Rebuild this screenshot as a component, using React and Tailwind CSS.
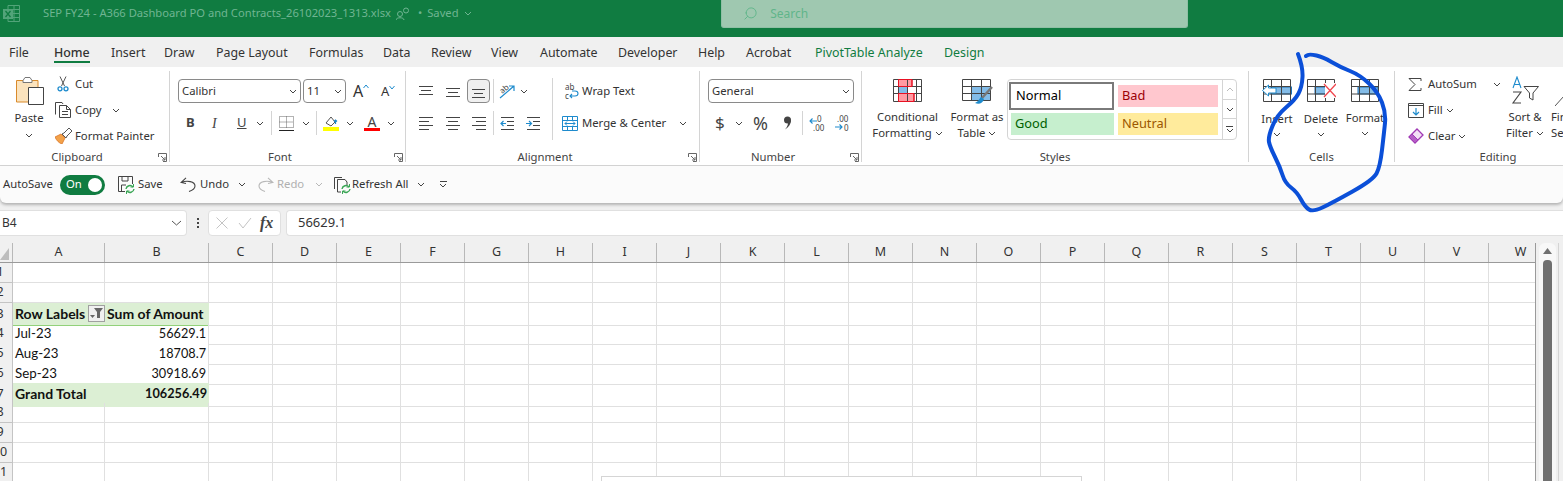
import { Search } from 'lucide-react';

const TABS = [
  { label: 'File', w: 'w-[45px]' },
  { label: 'Home', w: 'w-[57px]', active: true },
  { label: 'Insert', w: 'w-[53px]' },
  { label: 'Draw', w: 'w-[52px]' },
  { label: 'Page Layout', w: 'w-[93px]' },
  { label: 'Formulas', w: 'w-[74px]' },
  { label: 'Data', w: 'w-[48px]' },
  { label: 'Review', w: 'w-[60px]' },
  { label: 'View', w: 'w-[49px]' },
  { label: 'Automate', w: 'w-[78px]' },
  { label: 'Developer', w: 'w-[80px]' },
  { label: 'Help', w: 'w-[48px]' },
  { label: 'Acrobat', w: 'w-[69px]' },
  { label: 'PivotTable Analyze', w: 'w-[129px]', green: true },
  { label: 'Design', w: 'w-[60px]', green: true },
];

const COLS = 'ABCDEFGHIJKLMNOPQRSTUVW'.split('');
const ROWS = [1, 2, 3, 4, 5, 6, 7, 8, 9, 10, 11];
const PIVOT = {
  4: ['Jul-23', '56629.1'],
  5: ['Aug-23', '18708.7'],
  6: ['Sep-23', '30918.69'],
  7: ['Grand Total', '106256.49'],
};

function Chev({ className = '', color = '#444' }) {
  return (
    <svg width="8" height="5" viewBox="0 0 8 5" className={`shrink-0 ${className}`}>
      <path d="M1 1l3 3 3-3" fill="none" stroke={color} strokeWidth="1" />
    </svg>
  );
}

function Launcher() {
  return (
    <svg width="9" height="9" viewBox="0 0 9 9" className="absolute right-[2px] bottom-[0px]">
      <path d="M.5 4V.5H8.500V8.500H5M3 3l4 4M7 4v3H4" fill="none" stroke="#666" strokeWidth="1" />
    </svg>
  );
}

function Lines({ rows, w = 16, h = 14 }) {
  return (
    <svg width={w} height={h} viewBox={`0 0 ${w} ${h}`} className="shrink-0">
      {rows.map(([x1, x2, y], i) => (
        <path key={i} d={`M${x1} ${y + 0.5}H${x2}`} stroke="#444" strokeWidth="1" />
      ))}
    </svg>
  );
}

function Indent({ right }) {
  return (
    <svg width="15" height="13" viewBox="0 0 15 13" className="shrink-0">
      <path d="M1 .5H14M7 4.500H14M7 8.500H14M1 12.500H14" stroke="#444" />
      <path d={right ? 'M0 6.500H5M3 4l2.500 2.500L3 9' : 'M6 6.500H1M3.500 4L1 6.500 3.500 9'} fill="none" stroke="#1e8bcd" strokeWidth="1.200" />
    </svg>
  );
}

function Group({ label, w, children, launcher, sep = true }) {
  return (
    <div className={`relative flex h-[91px] shrink-0 flex-col ${w} ${sep ? 'border-r border-[#d4d4d4]' : ''}`}>
      <div className="min-h-0 flex-1">{children}</div>
      <div className={`h-[12px] text-center leading-[14px] text-[#444] ${launcher ? 'pr-[15px]' : ''}`}>{label}</div>
      {launcher && <Launcher />}
    </div>
  );
}

function Combo({ text, w, h = 'h-[24px]' }) {
  return (
    <div className={`flex items-center justify-between rounded-[4px] border border-[#8a8a8a] bg-white pl-[3px] pr-[3px] ${w} ${h}`}>
      <span>{text}</span>
      <Chev />
    </div>
  );
}

function PasteIcon() {
  return (
    <svg width="30" height="29" viewBox="0 0 30 29">
      <path d="M2.500 4.500H24V26H2.500z" fill="#fbe3bd" stroke="#d98a2b" />
      <path d="M9 4.500L11 1.500H16L18 4.500V6.500H9z" fill="#fff" stroke="#777" />
      <path d="M14.500 11.500H29.500V28.500H14.500z" fill="#fff" stroke="#444" />
    </svg>
  );
}

function CutIcon() {
  return (
    <svg width="12" height="16" viewBox="0 0 12 16">
      <path d="M3 .5L7.500 10M9 .5L4.500 10" stroke="#555" fill="none" />
      <circle cx="3" cy="12.800" r="2" fill="none" stroke="#1e8bcd" strokeWidth="1.300" />
      <circle cx="9" cy="12.800" r="2" fill="none" stroke="#1e8bcd" strokeWidth="1.300" />
    </svg>
  );
}

function CopyIcon() {
  return (
    <svg width="17" height="16" viewBox="0 0 17 16">
      <path d="M.5 12.500V.5H7L8 2M4.500 15.500V3.500H11.500L15.500 7.500V15.500z" fill="none" stroke="#444" />
      <path d="M11.500 3.500V7.500H15.500M7 9.500H13M7 12.500H13" fill="none" stroke="#444" />
    </svg>
  );
}

function BrushIcon() {
  return (
    <svg width="17" height="16" viewBox="0 0 17 16">
      <path d="M0 9l6-3 4 4-3 6C4 15 1.500 12.500 0 9z" fill="#f3a24a" stroke="#d9762a" strokeWidth=".8" />
      <path d="M7 6l2-1 5-5 3 3-5 5-1 2z" fill="#fff" stroke="#555" />
    </svg>
  );
}

function BorderIcon() {
  return (
    <svg width="15" height="15" viewBox="0 0 15 15" className="shrink-0">
      <path d="M.5.5H14.500V11.500H.5z" fill="none" stroke="#666" strokeDasharray="1 1" />
      <path d="M7.500.5V11.500M.5 6H14.500" stroke="#666" strokeDasharray="1 1" />
      <path d="M0 14.500H15" stroke="#222" />
    </svg>
  );
}

function FillIcon() {
  return (
    <svg width="16" height="16" viewBox="0 0 16 16" className="shrink-0">
      <path d="M3 8l5-6 4 5-4 4z" fill="#fff" stroke="#555" />
      <path d="M12.500 9V5M11 6.500l1.500-1.500L14 6.500" fill="none" stroke="#1e8bcd" strokeWidth="1.200" />
      <rect y="12" width="16" height="4" fill="#ffff00" />
    </svg>
  );
}

function OrientIcon() {
  return (
    <svg width="17" height="15" viewBox="0 0 17 15" className="overflow-visible">
      <path d="M1 14L15 2M10 2h5v5" fill="none" stroke="#1e8bcd" strokeWidth="1.200" />
      <text x="1" y="8" fontSize="8" fill="#444" transform="rotate(-40 5 6)">ab</text>
    </svg>
  );
}

function WrapIcon() {
  return (
    <svg width="16" height="17" viewBox="0 0 16 17" className="overflow-visible">
      <text x="1" y="7" fontSize="8" fill="#444">ab</text>
      <text x="1" y="16" fontSize="8" fill="#444">c</text>
      <path d="M6 13h5c4 0 4-5 0-5H8M8 11l-2 2 2 2" fill="none" stroke="#1e8bcd" strokeWidth="1.100" />
    </svg>
  );
}

function MergeIcon() {
  return (
    <svg width="16" height="15" viewBox="0 0 16 15">
      <path d="M.5.5H15.500V14.500H.5z" fill="none" stroke="#1e8bcd" />
      <path d="M.5 4.500H15.500M.5 10.500H15.500M5.500.5V4.500M10.500.5V4.500M5.500 10.500V14.500M10.500 10.500V14.500" stroke="#1e8bcd" />
      <path d="M3 7.500H13M5 5.500L3 7.500 5 9.500M11 5.500L13 7.500 11 9.500" fill="none" stroke="#1e8bcd" />
    </svg>
  );
}

function DecimalIcon({ more }) {
  return (
    <svg width="17" height="17" viewBox="0 0 17 17" className="shrink-0 overflow-visible">
      <text x={more ? 3 : 8} y="7" fontSize="8" fill="#444">{more ? '.00' : '0'}</text>
      <text x={more ? 10 : 4} y="16" fontSize="8" fill="#444">{more ? '0' : '.00'}</text>
      <path d={more ? 'M1 12H8M5.500 9.500L8 12 5.500 14.500' : 'M8 6H1M3.500 3.500L1 6 3.500 8.500'} fill="none" stroke="#1e8bcd" strokeWidth="1.100" />
    </svg>
  );
}

function CommaIcon() {
  return (
    <svg width="9" height="14" viewBox="0 0 9 14" className="shrink-0">
      <circle cx="4.500" cy="4" r="3.500" fill="#444" />
      <path d="M8 4c0 4-2 7-6 9.500C5 10 5 8 5 6z" fill="#444" />
    </svg>
  );
}

function CondIcon() {
  return (
    <svg width="29" height="23" viewBox="0 0 29 23">
      <path d="M5.500.5H19V7.500H5.500zM5.500 14.500H21V22.500H5.500z" fill="#ff9aa2" stroke="#e81123" />
      <rect x="5.500" y="7.500" width="9" height="7" fill="#83bce8" />
      <path d="M.5.5H28.500V22.500H.5zM.5 7.500H28.500M.5 14.500H28.500M5.500.5V22.500M14.500.5V22.500M23.500.5V22.500" fill="none" stroke="#444" />
      <path d="M5.500.5H19V7.500H5.500zM5.500 14.500H21V22.500H5.500z" fill="none" stroke="#e81123" />
    </svg>
  );
}

function TableIcon() {
  return (
    <svg width="31" height="27" viewBox="0 0 31 27">
      <rect x="10" y="7" width="18" height="15" fill="#83bce8" />
      <path d="M.5.5H28.500V21.500H.5zM.5 7.500H28.500M.5 14.500H28.500M9.500.5V21.500M19.500.5V21.500" fill="none" stroke="#444" />
      <path d="M30 8L20 19" stroke="#777" strokeWidth="2.500" />
      <path d="M19 18c-2 2-2 4-6 6 4 2 8 0 9-4z" fill="#1e8bcd" />
    </svg>
  );
}

function CellGrid({ kind }) {
  return (
    <svg width="30" height="23" viewBox="0 0 30 23">
      {kind === 'insert' && <rect x="9" y="8" width="20.500" height="7" fill="#83bce8" stroke="#1e72b8" />}
      {kind === 'delete' && <rect x="9" y="8" width="14" height="7" fill="#83bce8" stroke="#1e72b8" />}
      {kind === 'format' && <rect x="8" y="8" width="20" height="7" fill="#83bce8" stroke="#1e72b8" />}
      <path d="M1.500.5H28.500V22.500H1.500zM1.500 7.500H28.500M1.500 15H28.500M9.500.5V22.500M19.500.5V22.500" fill="none" stroke="#444" />
      {kind === 'insert' && <path d="M14 9H6.500V6L.5 11.500 6.500 17V14H14z" fill="#fff" stroke="#1e8bcd" />}
      {kind === 'delete' && (
        <>
          <rect x="19" y="4" width="11" height="15" fill="#fff" />
          <path d="M18 5L30 18M30 5L18 18" stroke="#f0474f" strokeWidth="1.300" />
        </>
      )}
    </svg>
  );
}

function SumIcon() {
  return (
    <svg width="14" height="13" viewBox="0 0 14 13">
      <path d="M13 3V.5H1L7 6.500 1 12.500H13V10" fill="none" stroke="#444" />
    </svg>
  );
}

function DownIcon() {
  return (
    <svg width="16" height="15" viewBox="0 0 16 15">
      <path d="M.5 14.500V.5H15.500V14.500z" fill="none" stroke="#444" />
      <path d="M.5 2.500H15.500" stroke="#444" />
      <path d="M8 5V12M5 9l3 3 3-3" fill="none" stroke="#1e8bcd" strokeWidth="1.200" />
    </svg>
  );
}

function EraserIcon() {
  return (
    <svg width="16" height="16" viewBox="0 0 16 16">
      <path d="M1 9l8-8 6 6-8 8z" fill="#f3dff5" stroke="#a13ab5" strokeWidth="1.300" />
      <path d="M1 9l3-3 6 6-3 3z" fill="#b55dc6" stroke="#a13ab5" />
    </svg>
  );
}

function SortIcon() {
  return (
    <svg width="28" height="29" viewBox="0 0 28 29">
      <path d="M2 12L6 1l4 11M3.500 8.500H8.500" fill="none" stroke="#1e8bcd" strokeWidth="1.100" />
      <path d="M2 16H10L2 27H10" fill="none" stroke="#444" strokeWidth="1.100" />
      <path d="M13 10.500H27.500L22 17V24L18.500 22V17z" fill="#fff" stroke="#444" />
    </svg>
  );
}

function SyncBadgeIcon({ refresh }) {
  return (
    <svg width="17" height="18" viewBox="0 0 17 18">
      {refresh ? (
        <path d="M.5 13V1.500H8M3.500 16V3.500H11L13 6V9M3.500 16H7" fill="none" stroke="#444" />
      ) : (
        <path d="M7 15.500H.5V.5H14.500V8M4 .5V5H10V.5M3.500 15V9H8" fill="none" stroke="#444" />
      )}
      <path d="M8 13a4 4 0 0 1 7-2M16 13a4 4 0 0 1-7 2" fill="none" stroke="#3aa655" strokeWidth="1.400" />
      <path d="M15.500 8v3h-3M8.500 18v-3h3" fill="none" stroke="#3aa655" strokeWidth="1" />
    </svg>
  );
}

function UndoIcon({ redo }) {
  const color = redo ? '#b8b8b8' : '#444';
  return (
    <svg width="16" height="15" viewBox="0 0 16 15" className={redo ? '-scale-x-100' : ''}>
      <path d="M6 .8L1 5.500l5 1M1.500 5.500C7 3 15 4.500 15 9c0 2.500-3 4.500-6 5.500" fill="none" stroke={color} strokeWidth="1.100" />
    </svg>
  );
}

function ExcelLogo() {
  return (
    <svg width="17" height="17" viewBox="0 0 17 17" className="opacity-60">
      <path d="M5 .5H16.500V16.500H5z" fill="none" stroke="#7fbf9f" />
      <path d="M11 .5V16.500M5 4.500H16.500M5 8.500H16.500M5 12.500H16.500" stroke="#7fbf9f" />
      <rect y="4" width="10" height="10" fill="#7fbf9f" />
      <path d="M2.500 6l5 6M7.500 6l-5 6" stroke="#107c41" strokeWidth="1.300" />
    </svg>
  );
}

// hand drawn ring round the Cells group, smoothed through midpoints
const RING = [
  [1298, 54], [1303, 67], [1302, 87], [1295, 100], [1277, 115], [1268, 137], [1270, 147], [1280, 167],
  [1285, 183], [1297, 192], [1305, 207], [1313, 212], [1332, 203], [1373, 180], [1380, 167], [1384, 133],
  [1386, 113], [1378, 92], [1360, 75], [1340, 67], [1323, 57], [1310, 54], [1306, 56],
];

function ringPath() {
  let d = `M${RING[0][0]} ${RING[0][1]}`;
  for (let i = 1; i < RING.length - 1; i++) {
    const mx = (RING[i][0] + RING[i + 1][0]) / 2;
    const my = (RING[i][1] + RING[i + 1][1]) / 2;
    d += ` Q${RING[i][0]} ${RING[i][1]} ${mx} ${my}`;
  }
  return d + ` L${RING[RING.length - 1][0]} ${RING[RING.length - 1][1]}`;
}

function TitleBar() {
  return (
    <div className="flex h-[37px] shrink-0 items-start bg-[#107c41] pl-[3px] text-[11.200px] text-[#6fb592]">
      <div className="mt-[5px]"><ExcelLogo /></div>
      <div className="ml-[23px] mt-[5px] w-[353px] whitespace-nowrap">SEP FY24 - A366 Dashboard PO and Contracts_26102023_1313.xlsx</div>
      <svg width="14" height="14" viewBox="0 0 14 14" className="mt-[7px]">
        <circle cx="4" cy="7" r="2.500" fill="none" stroke="#6fb592" />
        <path d="M0 13c0-3 8-3 8 0" fill="none" stroke="#6fb592" />
        <circle cx="10" cy="3.500" r="2.500" fill="none" stroke="#6fb592" />
      </svg>
      <span className="ml-[8px] mt-[5px]">•</span>
      <span className="ml-[5px] mt-[5px] w-[35px]">Saved</span>
      <Chev className="ml-[2px] mt-[11px]" color="#6fb592" />
      <div className="ml-[249px] flex h-[28px] w-[467px] items-center rounded-b-[3px] border-b border-l border-r border-[#8fbfa5] bg-[#9fc8b0] pl-[21px] text-[12px] text-[#5fb58a]">
        <Search size={15} strokeWidth={1.500} className="-scale-x-100" />
        <span className="ml-[12px]">Search</span>
      </div>
    </div>
  );
}

function Tabs() {
  return (
    <div className="flex h-[30px] shrink-0 bg-[#f0f0f0] pl-[9px] text-[12.400px] text-[#333]">
      {TABS.map((t) => (
        <div key={t.label} className={`shrink-0 leading-[31px] ${t.w} ${t.green ? 'text-[#107c41]' : ''}`}>
          <span className={`inline-block h-[26px] ${t.active ? 'border-b-2 border-[#107c41] font-medium' : ''}`}>{t.label}</span>
        </div>
      ))}
    </div>
  );
}

function Clipboard() {
  return (
    <Group label="Clipboard" w="w-[170px]" launcher>
      <div className="flex">
        <div className="ml-[11px] flex w-[36px] flex-col items-center pt-[5px]">
          <PasteIcon />
          <span className="mt-[5px]">Paste</span>
          <Chev className="mt-[6px]" />
        </div>
        <div className="ml-[10px] flex flex-col">
          <div className="flex h-[26px] items-center"><span className="w-[18px]"><CutIcon /></span><span>Cut</span></div>
          <div className="flex h-[26px] items-center"><span className="-ml-[2px] w-[20px]"><CopyIcon /></span><span>Copy</span><Chev className="ml-[11px]" /></div>
          <div className="flex h-[26px] items-center"><span className="-ml-[2px] w-[20px]"><BrushIcon /></span><span>Format Painter</span></div>
        </div>
      </div>
    </Group>
  );
}

function Font() {
  return (
    <Group label="Font" w="w-[236px]" launcher>
      <div className="ml-[8px] mt-[8px] flex items-center">
        <Combo text="Calibri" w="w-[123px]" />
        <Combo text="11" w="w-[43px] ml-[2px]" />
        <span className="ml-[7px] flex w-[28px] items-start text-[16px] leading-none">A<svg width="6" height="5" viewBox="0 0 6 5" className="mt-[1px]"><path d="M.5 4L3 1l2.500 3" fill="none" stroke="#1e8bcd" /></svg></span>
        <span className="flex w-[20px] items-start text-[13px] leading-none">A<svg width="6" height="5" viewBox="0 0 6 5"><path d="M.5 1L3 4l2.500-3" fill="none" stroke="#1e8bcd" /></svg></span>
      </div>
      <div className="mt-[8px] flex h-[24px] items-center pl-[15px] text-[#444]">
        <span className="w-[26px] pl-[1px] text-[13px] font-bold">B</span>
        <span className="w-[26px] pl-[1px] font-['Liberation_Serif',serif] text-[14px] italic">I</span>
        <span className="w-[19px] text-[13px] underline">U</span>
        <Chev />
        <span className="mx-[7px] h-[24px] border-r border-[#d4d4d4]" />
        <BorderIcon />
        <Chev className="ml-[8px]" />
        <span className="mx-[6px] h-[24px] border-r border-[#d4d4d4]" />
        <FillIcon />
        <Chev className="ml-[7px]" />
        <span className="ml-[10px] flex w-[16px] flex-col items-center text-[14px] leading-[13px]">A<span className="h-[3px] w-[16px] bg-[#ff0000]" /></span>
        <Chev className="ml-[7px]" />
      </div>
    </Group>
  );
}

function Alignment() {
  return (
    <Group label="Alignment" w="w-[294px]" launcher>
      <div className="flex">
        <div className="ml-[6px] flex w-[135px] shrink-0 flex-col">
          <div className="mt-[8px] flex h-[24px] items-center">
            <span className="flex w-[27px] justify-center"><Lines rows={[[1, 15, 2], [3, 13, 6], [1, 15, 10]]} /></span>
            <span className="flex w-[28px] justify-center"><Lines rows={[[1, 15, 4], [3, 13, 8], [1, 15, 12]]} /></span>
            <span className="flex h-[24px] w-[23px] items-center justify-center rounded-[4px] border border-[#8a8a8a] bg-[#f0f0f0]"><Lines rows={[[1, 14, 5], [3, 12, 9], [1, 14, 13]]} /></span>
            <span className="mx-[3px] h-[24px] border-r border-[#d4d4d4]" />
            <span className="ml-[2px]"><OrientIcon /></span>
            <Chev className="ml-[4px]" />
          </div>
          <div className="mt-[8px] flex h-[24px] items-center">
            <span className="flex w-[27px] justify-center"><Lines rows={[[1, 15, 1], [1, 11, 5], [1, 15, 9], [1, 11, 13]]} /></span>
            <span className="flex w-[28px] justify-center"><Lines rows={[[1, 15, 1], [3, 13, 5], [1, 15, 9], [3, 13, 13]]} /></span>
            <span className="flex w-[23px] justify-center"><Lines rows={[[1, 15, 1], [5, 15, 5], [1, 15, 9], [5, 15, 13]]} /></span>
            <span className="mx-[3px] h-[24px] border-r border-[#d4d4d4]" />
            <span className="ml-[3px]"><Indent /></span>
            <span className="ml-[11px]"><Indent right /></span>
          </div>
        </div>
        <span className="ml-[5px] mt-[7px] h-[62px] border-r border-[#d4d4d4]" />
        <div className="ml-[9px] flex flex-col">
          <div className="mt-[8px] flex h-[24px] items-center"><span className="ml-[2px] w-[18px]"><WrapIcon /></span>Wrap Text</div>
          <div className="mt-[8px] flex h-[24px] items-center"><span className="w-[20px]"><MergeIcon /></span>Merge &amp; Center<Chev className="ml-[13px]" /></div>
        </div>
      </div>
    </Group>
  );
}

function NumberGroup() {
  return (
    <Group label="Number" w="w-[162px]" launcher>
      <div className="ml-[8px] mt-[8px]"><Combo text="General" w="w-[146px]" /></div>
      <div className="mt-[8px] flex h-[24px] items-center pl-[15px] text-[#444]">
        <span className="w-[20px] text-[17px]">$</span>
        <Chev />
        <span className="ml-[10px] w-[25px] text-[18px]">%</span>
        <span className="ml-[5px]"><CommaIcon /></span>
        <span className="ml-[10px] h-[24px] border-r border-[#d4d4d4]" />
        <span className="ml-[6px]"><DecimalIcon /></span>
        <span className="ml-[8px]"><DecimalIcon more /></span>
      </div>
    </Group>
  );
}

function StyleSwatch({ text, cls }) {
  return <div className={`flex items-center pl-[4px] text-[12.800px] ${cls}`}>{text}</div>;
}

function Styles() {
  return (
    <Group label="Styles" w="w-[387px]">
      <div className="flex">
        <div className="ml-[10px] flex w-[71px] flex-col items-center pt-[8px]">
          <CondIcon />
          <span className="mt-[7px] leading-[16px]">Conditional</span>
          <span className="flex items-center leading-[16px]">Formatting<Chev className="ml-[3px]" /></span>
        </div>
        <div className="ml-[4px] flex w-[60px] flex-col items-center pt-[8px]">
          <TableIcon />
          <span className="mt-[3px] leading-[16px]">Format as</span>
          <span className="flex items-center leading-[16px]">Table<Chev className="ml-[3px]" /></span>
        </div>
        <div className="mt-[8px] flex h-[61px] w-[230px] rounded-[4px] border border-[#d4d4d4]">
          <div className="grid w-[214px] grid-cols-[105px_100px] grid-rows-[28px_22px] items-center gap-x-[4px] gap-y-[3px] pl-[1px] pt-[2px]">
            <StyleSwatch text="Normal" cls="h-[28px] border-2 border-[#7a7a7a] bg-white pl-[5px] text-black" />
            <StyleSwatch text="Bad" cls="h-[22px] bg-[#ffc7ce] text-[#9c0006]" />
            <StyleSwatch text="Good" cls="ml-[2px] h-[22px] bg-[#c6efce] text-[#006100]" />
            <StyleSwatch text="Neutral" cls="h-[22px] bg-[#ffeb9c] text-[#9c5700]" />
          </div>
          <div className="flex flex-1 flex-col border-l border-[#d4d4d4]">
            <div className="flex h-[20px] items-center justify-center border-b border-[#d4d4d4]"><Chev className="rotate-180" color="#bbb" /></div>
            <div className="flex h-[19px] items-center justify-center border-b border-[#d4d4d4]"><Chev /></div>
            <div className="flex flex-1 flex-col items-center justify-center gap-[1px]"><span className="h-px w-[7px] bg-[#444]" /><Chev /></div>
          </div>
        </div>
      </div>
    </Group>
  );
}

function CellButton({ kind, label, w, top = 'mt-[9px]' }) {
  return (
    <div className={`flex flex-col items-center pt-[8px] ${w}`}>
      <CellGrid kind={kind} />
      <span className={`leading-[16px] ${top}`}>{label}</span>
      <Chev className="mt-[5px]" />
    </div>
  );
}

function Cells() {
  return (
    <Group label="Cells" w="w-[146px]">
      <div className="flex pl-[6px]">
        <CellButton kind="insert" label="Insert" w="w-[44px]" />
        <CellButton kind="delete" label="Delete" w="w-[44px]" />
        <CellButton kind="format" label="Format" w="w-[44px]" top="mt-[8px]" />
      </div>
    </Group>
  );
}

function Editing() {
  return (
    <Group label="Editing" w="w-[206px]" sep={false}>
      <div className="flex">
        <div className="ml-[13px] flex w-[98px] shrink-0 flex-col">
          <div className="flex h-[26px] items-center"><span className="w-[20px]"><SumIcon /></span>AutoSum<Chev className="ml-[16px]" /></div>
          <div className="flex h-[26px] items-center"><span className="w-[20px]"><DownIcon /></span>Fill<Chev className="ml-[3px]" /></div>
          <div className="flex h-[26px] items-center"><span className="w-[20px]"><EraserIcon /></span>Clear<Chev className="ml-[3px]" /></div>
        </div>
        <div className="flex w-[38px] shrink-0 flex-col items-center pt-[5px]">
          <SortIcon />
          <span className="mt-[4px] leading-[16px]">Sort &amp;</span>
          <span className="flex items-center leading-[16px]">Filter<Chev className="ml-[3px]" /></span>
        </div>
        <div className="ml-[7px] flex shrink-0 flex-col pt-[24px]">
          <svg width="14" height="12" viewBox="0 0 14 12" className="ml-[4px] mb-[2px]"><path d="M0 11L9 1" stroke="#555" /></svg>
          <span className="leading-[16px]">Find &amp;</span>
          <span className="leading-[16px]">Select</span>
        </div>
      </div>
    </Group>
  );
}

function QuickAccess() {
  return (
    <div className="flex h-[37px] shrink-0 items-center rounded-b-[6px] bg-[#fbfbfb] pl-[3px] shadow-[0_2px_3px_rgba(0,0,0,0.25)]">
      <span className="w-[50px]">AutoSave</span>
      <div className="ml-[7px] flex h-[20px] w-[45px] items-center justify-between rounded-full bg-[#107c41] pl-[6px] pr-[3px] text-white">
        <span>On</span>
        <span className="h-[14px] w-[14px] rounded-full bg-white" />
      </div>
      <span className="ml-[13px]"><SyncBadgeIcon /></span>
      <span className="ml-[3px] w-[30px]">Save</span>
      <span className="ml-[12px]"><UndoIcon /></span>
      <span className="ml-[4px] w-[31px]">Undo</span>
      <Chev className="ml-[7px]" />
      <span className="ml-[12px]"><UndoIcon redo /></span>
      <span className="ml-[3px] w-[29px] text-[#b0b0b0]">Redo</span>
      <Chev className="ml-[9px]" color="#b8b8b8" />
      <span className="ml-[11px]"><SyncBadgeIcon refresh /></span>
      <span className="ml-[1px] w-[58px]">Refresh All</span>
      <Chev className="ml-[7px]" />
      <span className="ml-[14px] flex flex-col items-center gap-[1px]"><span className="h-px w-[7px] bg-[#444]" /><Chev /></span>
    </div>
  );
}

function FormulaBar() {
  return (
    <div className="flex h-[26px] shrink-0 items-stretch">
      <div className="flex w-[187px] items-center justify-between rounded-r-[4px] border border-l-0 border-[#e0e0e0] bg-white pl-[2px] pr-[4px] text-[12px]">
        <span>B4</span>
        <svg width="11" height="6" viewBox="0 0 11 6"><path d="M1 1l4.500 4L10 1" fill="none" stroke="#555" /></svg>
      </div>
      <div className="flex w-[21px] flex-col items-center justify-center gap-[2px]">
        <span className="h-[2px] w-[2px] bg-[#444]" />
        <span className="h-[2px] w-[2px] bg-[#444]" />
        <span className="h-[2px] w-[2px] bg-[#444]" />
      </div>
      <div className="flex w-[73px] items-center rounded-[4px] border border-[#e0e0e0] bg-white pl-[7px]">
        <svg width="12" height="12" viewBox="0 0 12 12"><path d="M.5.5l11 11M11.500.5l-11 11" stroke="#c4c4c4" /></svg>
        <svg width="14" height="12" viewBox="0 0 14 12" className="ml-[10px]"><path d="M1 6l4 5L13 1" fill="none" stroke="#c4c4c4" /></svg>
        <span className="ml-[8px] font-['Liberation_Serif',serif] text-[16px] font-bold italic text-[#444]">fx</span>
      </div>
      <div className="ml-[5px] flex flex-1 items-center rounded-l-[4px] border border-r-0 border-[#e0e0e0] bg-white pl-[11px] text-[13px]">56629.1</div>
    </div>
  );
}

function ColumnHeader() {
  return (
    <div className="grid h-[20px] grid-cols-[13px_92px_104px_repeat(21,64px)] border-b border-[#9a9a9a] bg-[#f0f0f0] text-[12.500px] text-[#333]">
      <div className="flex items-end justify-end border-r border-[#b8b8b8] pb-[2px] pr-[3px]">
        <svg width="9" height="12" viewBox="0 0 9 12" className="-ml-px"><path d="M9 0V12H0z" fill="#bdbdbd" /></svg>
      </div>
      {COLS.map((c) => (
        <div key={c} className="flex items-center justify-center border-r border-[#b8b8b8]">{c}</div>
      ))}
    </div>
  );
}

function PivotCell({ row, index }) {
  const total = row === 7;
  const data = PIVOT[row];
  let cls = 'pt-[1px] border-b border-white';
  if (row === 3) cls = 'pb-[1px] bg-[#dcefd4] border-b border-[#92d17a]';
  if (row === 6) cls = 'pt-[1px] border-b border-[#92d17a]';
  if (total) cls = 'pb-[2px] bg-[#dcefd4] border-b border-[#dcefd4]';
  if (index === 1 && !total && row !== 3) cls += ' border-r border-r-[#e0e0e0]';

  if (row === 3 && index === 0) {
    return (
      <div className={`flex items-center justify-between pl-[2px] text-[14px] font-bold ${cls}`}>
        <span>Row Labels</span>
        <span className="flex h-[17px] w-[17px] items-center justify-center border border-[#a0a0a0] bg-[#f0f0f0]">
          <svg width="13" height="11" viewBox="0 0 13 11">
            <path d="M4 0H13L10 4V10H7V4z" fill="#666" />
            <path d="M0 7H5L2.500 10z" fill="#666" />
          </svg>
        </span>
      </div>
    );
  }
  if (row === 3) {
    return <div className={`flex items-center whitespace-nowrap pl-[2px] text-[14px] font-bold ${cls}`}>Sum of Amount</div>;
  }
  if (index === 0) {
    return <div className={`flex items-center pl-[2px] ${total ? 'text-[14px] font-bold' : 'text-[13.300px]'} ${cls}`}>{data[0]}</div>;
  }
  return <div className={`flex items-center justify-end pr-[2px] text-[12.700px] ${total ? 'font-bold' : ''} ${cls}`}>{data[1]}</div>;
}

function SheetRow({ row }) {
  const isPivot = row >= 3 && row <= 7;
  return (
    <div className="grid h-[20px] grid-cols-[13px_92px_104px_repeat(21,64px)] font-['Lato',sans-serif] text-[#111]">
      <div className="flex items-center overflow-hidden border-r border-b border-[#c4c4c4] bg-[#f0f0f0] font-['Noto_Sans',sans-serif] text-[12.500px] text-[#333]">
        <span className="-ml-[12px] w-[24px] shrink-0 text-center">{row}</span>
      </div>
      {isPivot ? (
        <>
          <PivotCell row={row} index={0} />
          <PivotCell row={row} index={1} />
        </>
      ) : (
        <>
          <div className="border-r border-b border-[#e0e0e0]" />
          <div className="border-r border-b border-[#e0e0e0]" />
        </>
      )}
      {COLS.slice(2).map((c) => (
        <div key={c} className="border-r border-b border-[#e0e0e0]" />
      ))}
    </div>
  );
}

function Scrollbar() {
  return (
    <div className="flex min-w-0 flex-1 bg-[#f0f0f0]">
      <div className="ml-[3px] flex w-[17px] flex-col items-center rounded-t-[6px] bg-[#f8f8f8] pt-[5px]">
        <svg width="9" height="6" viewBox="0 0 9 6"><path d="M4.500 0L9 6H0z" fill="#707070" /></svg>
        <div className="mt-[6px] w-[9px] flex-1 rounded-t-[4px] bg-[#707070]" />
      </div>
      <div className="ml-[2px] w-px bg-[#d4d4d4]" />
    </div>
  );
}

export default function App() {
  return (
    <div className="relative flex h-screen w-full flex-col overflow-hidden bg-[#f0f0f0] font-['Noto_Sans',sans-serif] text-[11.300px] text-[#333]">
      <TitleBar />
      <Tabs />
      <div className="flex h-[99px] shrink-0 overflow-hidden border-b border-[#d4d4d4] bg-white pt-[4px]">
        <Clipboard />
        <Font />
        <Alignment />
        <NumberGroup />
        <Styles />
        <Cells />
        <Editing />
      </div>
      <QuickAccess />
      <div className="mt-[7px]"><FormulaBar /></div>
      <div className="mt-[7px] flex min-h-0 flex-1">
        <div className="w-[1536px] shrink-0 overflow-hidden border-r border-[#9a9a9a]">
          <ColumnHeader />
          <div className="bg-white">
            {ROWS.map((r) => <SheetRow key={r} row={r} />)}
          </div>
        </div>
        <Scrollbar />
      </div>

      {/* pane peeking in at the bottom of the sheet */}
      <div className="absolute left-[601px] top-[476px] h-[12px] w-[481px] border border-[#d5d5d5] bg-white" />

      {/* pen mark drawn on the screenshot */}
      <svg className="pointer-events-none absolute left-0 top-0" width="1563" height="481" viewBox="0 0 1563 481">
        <path d={ringPath()} fill="none" stroke="#0b4fd8" strokeWidth="4" strokeLinecap="round" strokeLinejoin="round" />
      </svg>
    </div>
  );
}
